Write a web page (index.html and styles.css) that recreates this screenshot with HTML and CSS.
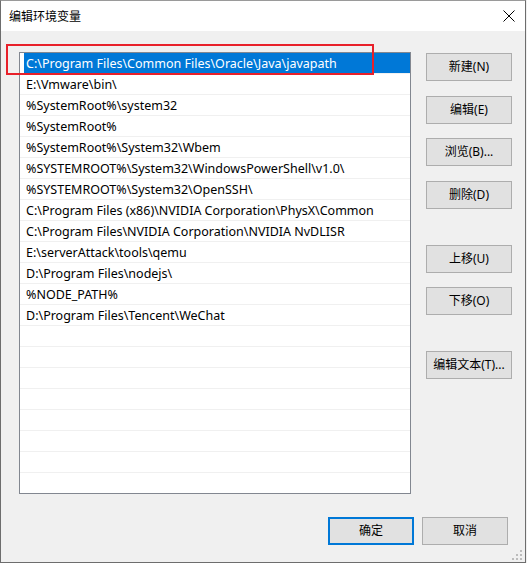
FILE: index.html
```html
<!DOCTYPE html>
<html lang="zh-CN">
<head>
<meta charset="utf-8">
<title>编辑环境变量</title>
<link rel="stylesheet" href="styles.css">
</head>
<body>
<div class="window">
  <div class="titlebar">
    <span class="title">编辑环境变量</span>
    <svg class="close" width="12" height="12" viewBox="0 0 12 12"><path d="M0.5 0.5 L11.5 11.5 M11.5 0.5 L0.5 11.5" stroke="#000" stroke-width="1" fill="none"/></svg>
  </div>
  <div class="content">
    <div class="main">
      <div class="list">
        <div class="row"><span class="item selected">C:\Program Files\Common Files\Oracle\Java\javapath</span></div>
        <div class="row"><span class="item">E:\Vmware\bin\</span></div>
        <div class="row"><span class="item">%SystemRoot%\system32</span></div>
        <div class="row"><span class="item">%SystemRoot%</span></div>
        <div class="row"><span class="item">%SystemRoot%\System32\Wbem</span></div>
        <div class="row"><span class="item">%SYSTEMROOT%\System32\WindowsPowerShell\v1.0\</span></div>
        <div class="row"><span class="item">%SYSTEMROOT%\System32\OpenSSH\</span></div>
        <div class="row"><span class="item">C:\Program Files (x86)\NVIDIA Corporation\PhysX\Common</span></div>
        <div class="row"><span class="item">C:\Program Files\NVIDIA Corporation\NVIDIA NvDLISR</span></div>
        <div class="row"><span class="item">E:\serverAttack\tools\qemu</span></div>
        <div class="row"><span class="item">D:\Program Files\nodejs\</span></div>
        <div class="row"><span class="item">%NODE_PATH%</span></div>
        <div class="row"><span class="item">D:\Program Files\Tencent\WeChat</span></div>
        <div class="row"></div>
        <div class="row"></div>
        <div class="row"></div>
        <div class="row"></div>
        <div class="row"></div>
        <div class="row"></div>
        <div class="row"></div>
        <div class="row last"></div>
      </div>
      <div class="side">
        <button class="btn">新建(N)</button>
        <button class="btn gap-s">编辑(E)</button>
        <button class="btn gap-xs">浏览(B)...</button>
        <button class="btn gap-s">删除(D)</button>
        <button class="btn gap-l">上移(U)</button>
        <button class="btn gap-xs">下移(O)</button>
        <button class="btn gap-l">编辑文本(T)...</button>
      </div>
    </div>
    <div class="footer">
      <button class="btn default">确定</button>
      <button class="btn">取消</button>
    </div>
    <svg class="grip" width="10" height="10" viewBox="0 0 10 10">
      <rect x="8" y="0" width="2" height="2" fill="#bcbcbc"/>
      <rect x="4" y="4" width="2" height="2" fill="#bcbcbc"/>
      <rect x="8" y="4" width="2" height="2" fill="#bcbcbc"/>
      <rect x="0" y="8" width="2" height="2" fill="#bcbcbc"/>
      <rect x="4" y="8" width="2" height="2" fill="#bcbcbc"/>
      <rect x="8" y="8" width="2" height="2" fill="#bcbcbc"/>
    </svg>
  </div>
  <div class="highlight"></div>
</div>
</body>
</html>
```
FILE: styles.css
```css
html, body {
  margin: 0;
  padding: 0;
}
body {
  width: 527px;
  height: 563px;
  background: #f0f0f0;
  font-family: "Noto Sans", "Noto Sans CJK SC", sans-serif;
  font-size: 12px;
  color: #000;
  overflow: hidden;
}
.window {
  position: relative;
  width: 524px;
  height: 561px;
  border: 1px solid #6d6d6d;
  border-top-color: #9a9a9a;
  background: #f0f0f0;
  display: flex;
  flex-direction: column;
}
.titlebar {
  height: 30px;
  background: #fff;
  display: flex;
  align-items: center;
  justify-content: space-between;
  padding: 0 8px 0 8px;
  flex: none;
}
.title {
  font-family: "Noto Sans CJK SC", sans-serif;
  font-size: 12px;
  line-height: 16px;
}
.close {
  display: block;
  margin-right: 2px;
}
.content {
  position: relative;
  flex: 1;
  padding: 21px 0 0 18px;
  display: flex;
  flex-direction: column;
}
.main {
  display: flex;
  gap: 15px;
}
.list {
  width: 390px;
  height: 440px;
  border: 1px solid #828790;
  background: #fff;
  overflow: hidden;
}
.row {
  height: 20px;
  border-bottom: 1px solid #f0f0f0;
  display: flex;
  align-items: stretch;
}
.row.last {
  border-bottom: none;
}
.item {
  flex: 1;
  margin-left: 4px;
  padding-left: 2px;
  padding-top: 2px;
  line-height: 18px;
  white-space: nowrap;
  font-size: 12.5px;
}
.item.selected {
  background: #0078d7;
  color: #fff;
}
.side {
  display: flex;
  flex-direction: column;
  width: 86px;
  padding-top: 1px;
}
.btn {
  font-family: "Noto Sans", "Noto Sans CJK SC", sans-serif;
  font-size: 12px;
  width: 86px;
  height: 28px;
  margin: 0;
  padding: 0;
  background: #e1e1e1;
  border: 1px solid #adadad;
  color: #000;
  line-height: 26px;
  text-align: center;
}
.gap-xs { margin-top: 14px; }
.gap-s { margin-top: 15px; }
.gap-l { margin-top: 36px; }
.footer {
  display: flex;
  justify-content: flex-end;
  gap: 8px;
  padding-right: 17px;
  margin-top: 23px;
}
.btn.default {
  border: 2px solid #0078d7;
  line-height: 24px;
}
.grip {
  position: absolute;
  right: 3px;
  bottom: 2px;
}
.highlight {
  position: absolute;
  left: 5px;
  top: 43px;
  width: 364px;
  height: 27px;
  border: 2px solid #e8202a;
  pointer-events: none;
}
```
